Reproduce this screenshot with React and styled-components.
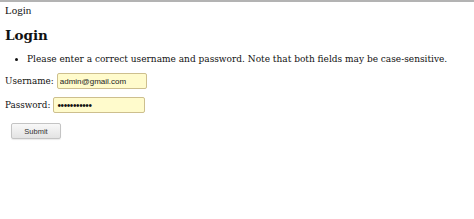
import React from "react";
import styled, { createGlobalStyle } from "styled-components";

const Global = createGlobalStyle`
  html, body {
    margin: 0;
    padding: 0;
    background: #fff;
  }
  body {
    border-top: 2px solid #b3b3b3;
    font-family: "DejaVu Serif", serif;
    color: #111;
  }
`;

const Page = styled.div`
  padding: 2px 5px;
`;

const Crumb = styled.div`
  font-family: "Liberation Serif", serif;
  font-size: 11px;
  line-height: 13px;
`;

const Title = styled.h1`
  font-size: 13.5px;
  line-height: 16px;
  margin: 10px 0 9px;
  font-weight: bold;
`;

const Errors = styled.ul`
  margin: 0 0 7px;
  padding-left: 22px;
  font-size: 9px;
  line-height: 14px;
`;

const Form = styled.form`
  display: flex;
  flex-direction: column;
  gap: 8px;
`;

const Row = styled.div`
  display: flex;
  align-items: center;
  gap: 3px;
  font-size: 8.8px;
`;

const Field = styled.input`
  width: ${(p) => p.$w}px;
  height: 16px;
  box-sizing: border-box;
  border: 1px solid #cdbf8e;
  border-radius: 2px;
  background: #fffbcc;
  font-family: "Liberation Sans", sans-serif;
  font-size: 8px;
  padding: 0 2px;
  color: #222;

  &[type="password"] {
    font-size: 10px;
    letter-spacing: -0.4px;
    padding-left: 3px;
    color: #111;
  }
`;

const Button = styled.button`
  margin: 2px 0 0 6px;
  width: 50px;
  height: 16px;
  align-self: flex-start;
  border: 1px solid #c4c4c4;
  border-radius: 2px;
  background: linear-gradient(#f8f8f8, #e3e3e3);
  box-shadow: 0 1px 1px rgba(0, 0, 0, 0.08);
  font-family: "Liberation Sans", sans-serif;
  font-size: 7.5px;
  color: #333;
`;

export default function App() {
  return (
    <>
      <Global />
      <Page>
        <Crumb>Login</Crumb>
        <Title>Login</Title>
        <Errors>
          <li>Please enter a correct username and password. Note that both fields may be case-sensitive.</li>
        </Errors>
        <Form onSubmit={(e) => e.preventDefault()}>
          <Row>
            <label>Username:</label>
            <Field $w={90} type="text" defaultValue="admin@gmail.com" />
          </Row>
          <Row>
            <label>Password:</label>
            <Field $w={92} type="password" defaultValue="adminadmin1" />
          </Row>
          <Button type="submit">Submit</Button>
        </Form>
      </Page>
    </>
  );
}
